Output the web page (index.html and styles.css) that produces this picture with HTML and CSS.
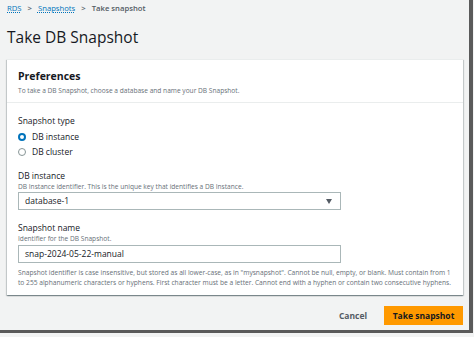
FILE: index.html
```html
<!DOCTYPE html>
<html lang="en">
<head>
  <meta charset="UTF-8">
  <title>Take DB Snapshot | RDS</title>
  <link rel="stylesheet" href="styles.css">
</head>
<body>
  <div class="frame">
    <div class="crumbs">
      <a href="#">RDS</a>
      <span class="sep">&gt;</span>
      <a href="#">Snapshots</a>
      <span class="sep">&gt;</span>
      <span class="current">Take snapshot</span>
    </div>

    <h1>Take DB Snapshot</h1>

    <div class="card">
      <div class="card-head">
        <h2>Preferences</h2>
        <p class="hint sub">To take a DB Snapshot, choose a database and name your DB Snapshot.</p>
      </div>
      <div class="card-body">
        <div class="field radios">
          <div class="label">Snapshot type</div>
          <label class="radio"><span class="dot on"></span>DB instance</label>
          <label class="radio"><span class="dot"></span>DB cluster</label>
        </div>

        <div class="field">
          <div class="label">DB instance</div>
          <p class="hint">DB Instance identifier. This is the unique key that identifies a DB Instance.</p>
          <div class="select">
            <span>database-1</span>
            <span class="arrow"></span>
          </div>
        </div>

        <div class="field">
          <div class="label">Snapshot name</div>
          <p class="hint">Identifier for the DB Snapshot.</p>
          <div class="input">snap-2024-05-22-manual</div>
          <p class="hint help">Snapshot identifier is case insensitive, but stored as all lower-case, as in "mysnapshot". Cannot be null, empty, or blank. Must contain from 1 to 255 alphanumeric characters or hyphens. First character must be a letter. Cannot end with a hyphen or contain two consecutive hyphens.</p>
        </div>
      </div>
    </div>

    <div class="actions">
      <button class="link-btn">Cancel</button>
      <button class="primary">Take snapshot</button>
    </div>
  </div>
</body>
</html>
```

FILE: styles.css
```css
body {
  margin: 0;
  background: #f2f3f3;
  font-family: 'Open Sans', 'Noto Sans', sans-serif;
  color: #16191f;
}
.frame {
  width: 462px;
  height: 330px;
  padding: 0 0 0 7px;
  background: #f2f3f3;
  border-right: 4px solid #5a5a5a;
  border-bottom: 3px solid #5a5a5a;
}
.crumbs {
  display: flex;
  align-items: center;
  gap: 6px;
  padding-top: 2px;
  font-size: 7.7px;
  line-height: 12px;
}
.crumbs a {
  color: #0073bb;
  text-decoration: underline dotted;
}
.crumbs .sep {
  color: #687078;
  font-weight: bold;
}
.crumbs .current {
  color: #545b64;
  font-weight: 600;
}
h1 {
  margin: 12px 0 0;
  font-size: 15.5px;
  font-weight: 400;
  line-height: 22px;
}
.card {
  width: 456px;
  margin-top: 11px;
  background: #fff;
  box-shadow: 0 1px 1px 0 rgba(0, 28, 36, 0.3), 1px 1px 1px 0 rgba(0, 28, 36, 0.15), -1px 1px 1px 0 rgba(0, 28, 36, 0.15);
  border-top: 1px solid #eaeded;
}
.card-head {
  padding: 9px 11px 6px;
  border-bottom: 1px solid #eaeded;
}
h2 {
  margin: 0;
  font-size: 10.5px;
  font-weight: 700;
  line-height: 14px;
}
.hint {
  margin: 0;
  font-size: 6.6px;
  line-height: 10px;
  color: #687078;
}
.hint.sub {
  margin-top: 3px;
}
.card-body {
  padding: 12px 11px 7px;
}
.field {
  margin-bottom: 12px;
}
.field.radios {
  margin-bottom: 11px;
}
.field:last-child {
  margin-bottom: 0;
}
.label {
  font-size: 8.5px;
  line-height: 12px;
}
.radios .label {
  margin-bottom: 2px;
}
.radio {
  display: flex;
  align-items: center;
  gap: 6px;
  font-size: 8.5px;
  line-height: 15px;
}
.dot {
  width: 8px;
  height: 8px;
  box-sizing: border-box;
  border-radius: 50%;
  border: 1px solid #879596;
  background: #fff;
}
.dot.on {
  border: 2.5px solid #0073bb;
}
.select,
.input {
  width: 323px;
  height: 18px;
  box-sizing: border-box;
  padding: 0 8px 0 6px;
  border: 1px solid #aab7b8;
  font-size: 8.5px;
  line-height: 16px;
  display: flex;
  align-items: center;
  justify-content: space-between;
}
.input {
  margin-top: 1px;
}
.arrow {
  width: 0;
  height: 0;
  border-left: 3.5px solid transparent;
  border-right: 3.5px solid transparent;
  border-top: 5px solid #545b64;
}
.help {
  margin-top: 5px;
  width: 438px;
  font-size: 6.65px;
}
.actions {
  width: 456px;
  display: flex;
  justify-content: flex-end;
  align-items: center;
  gap: 13px;
  margin-top: 11px;
}
button {
  font-family: inherit;
  font-size: 8.5px;
  font-weight: 700;
  border: none;
  cursor: pointer;
}
.link-btn {
  background: none;
  color: #545b64;
  padding: 4px;
}
.primary {
  background: #ff9900;
  color: #16191f;
  padding: 0;
  height: 19px;
  width: 79px;
}
```
